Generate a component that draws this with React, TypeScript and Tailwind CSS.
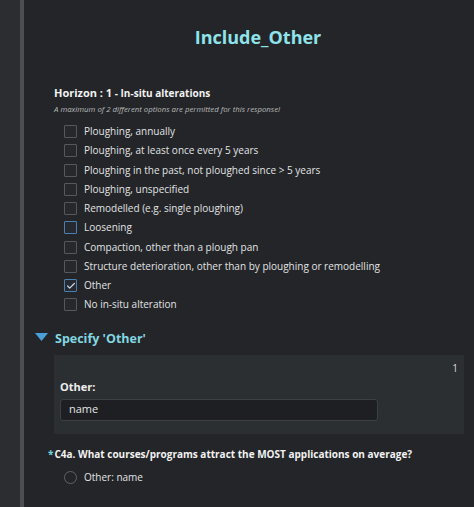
import { Check } from "lucide-react";

const options = [
  { label: "Ploughing, annually" },
  { label: "Ploughing, at least once every 5 years" },
  { label: "Ploughing in the past, not ploughed since > 5 years" },
  { label: "Ploughing, unspecified" },
  { label: "Remodelled (e.g. single ploughing)" },
  { label: "Loosening", focused: true },
  { label: "Compaction, other than a plough pan" },
  { label: "Structure deterioration, other than by ploughing or remodelling" },
  { label: "Other", checked: true },
  { label: "No in-situ alteration" },
];

function CheckRow({ label, checked, focused }: { label: string; checked?: boolean; focused?: boolean }) {
  return (
    <div className="flex h-[19.25px] items-center gap-[7px]">
      <span
        className={[
          "flex h-[13px] w-[13px] items-center justify-center rounded-[1px] border",
          checked || focused ? "border-[#4d7fae] bg-[#262a30]" : "border-[#55585c] bg-[#26282b]",
        ].join(" ")}
      >
        {checked ? <Check className="h-[10px] w-[10px] text-[#c8d8ea]" strokeWidth={3} /> : null}
      </span>
      <span className="text-[10px] text-[#e2e3e4]">{label}</span>
    </div>
  );
}

export default function App() {
  return (
    <div
      className="flex h-[507px] w-[474px] overflow-hidden bg-[#232528]"
      style={{ fontFamily: '"Open Sans", "Noto Sans", sans-serif' }}
    >
      <div className="w-[20px] shrink-0 bg-[#2b2d30]" />
      <div className="w-[4px] shrink-0 bg-[#4c4e51]" />
      <main className="flex min-w-0 flex-1 flex-col pr-[10px]">
        <h1 className="mt-[24px] pl-[28px] text-center text-[18px] font-bold leading-[26px] text-[#8fe3ea]">
          Include_Other
        </h1>

        <div className="mt-[35px] pl-[30px]">
          <div className="text-[10px] font-bold leading-[16px] text-[#f2f2f2]">
            <span className="text-[11px]">Horizon : 1</span> - In-situ alterations
          </div>
          <div className="mt-[3px] text-[7.8px] italic leading-[10px] text-[#b9babb]">
            A maximum of 2 different options are permitted for this responsel
          </div>

          <div className="mt-[8px] flex flex-col pl-[10px]">
            {options.map((o) => (
              <CheckRow key={o.label} label={o.label} checked={o.checked} focused={o.focused} />
            ))}
          </div>
        </div>

        <div className="mt-[15px] flex items-center gap-[7px] pl-[11px]">
          <svg width="13" height="8" viewBox="0 0 13 8" className="mb-[3px]">
            <polygon points="0,0 13,0 6.5,8" fill="#4a9fd9" />
          </svg>
          <span className="text-[12.5px] font-bold leading-[18px] text-[#84d6e1]">Specify 'Other'</span>
        </div>

        <div className="ml-[30px] mt-[7px] bg-[#2c2f32] px-[6px] pb-[13px] pt-[6px]">
          <div className="text-right text-[10px] leading-[14px] text-[#d6d8d9]">1</div>
          <div className="mt-[5px] text-[11px] font-bold leading-[14px] text-[#eeeeee]">Other:</div>
          <div className="mt-[5px] flex h-[22px] w-[318px] items-center rounded-[3px] border border-[#3c3f43] bg-[#1d1f22] px-[8px] text-[11px] text-[#e4e4e4]">
            name
          </div>
        </div>

        <div className="mt-[12px] pl-[24px] text-[10px] font-bold leading-[16px] text-[#f2f2f2]">
          <span className="mr-[1px] text-[#6fd3dd]">*</span>C4a. What courses/programs attract the MOST applications on average?
        </div>
        <div className="mt-[8px] flex items-center gap-[7px] pl-[40px]">
          <span className="h-[13px] w-[13px] rounded-full border-[1.5px] border-[#606366]" />
          <span className="text-[10px] text-[#e2e3e4]">Other: name</span>
        </div>
      </main>
    </div>
  );
}
